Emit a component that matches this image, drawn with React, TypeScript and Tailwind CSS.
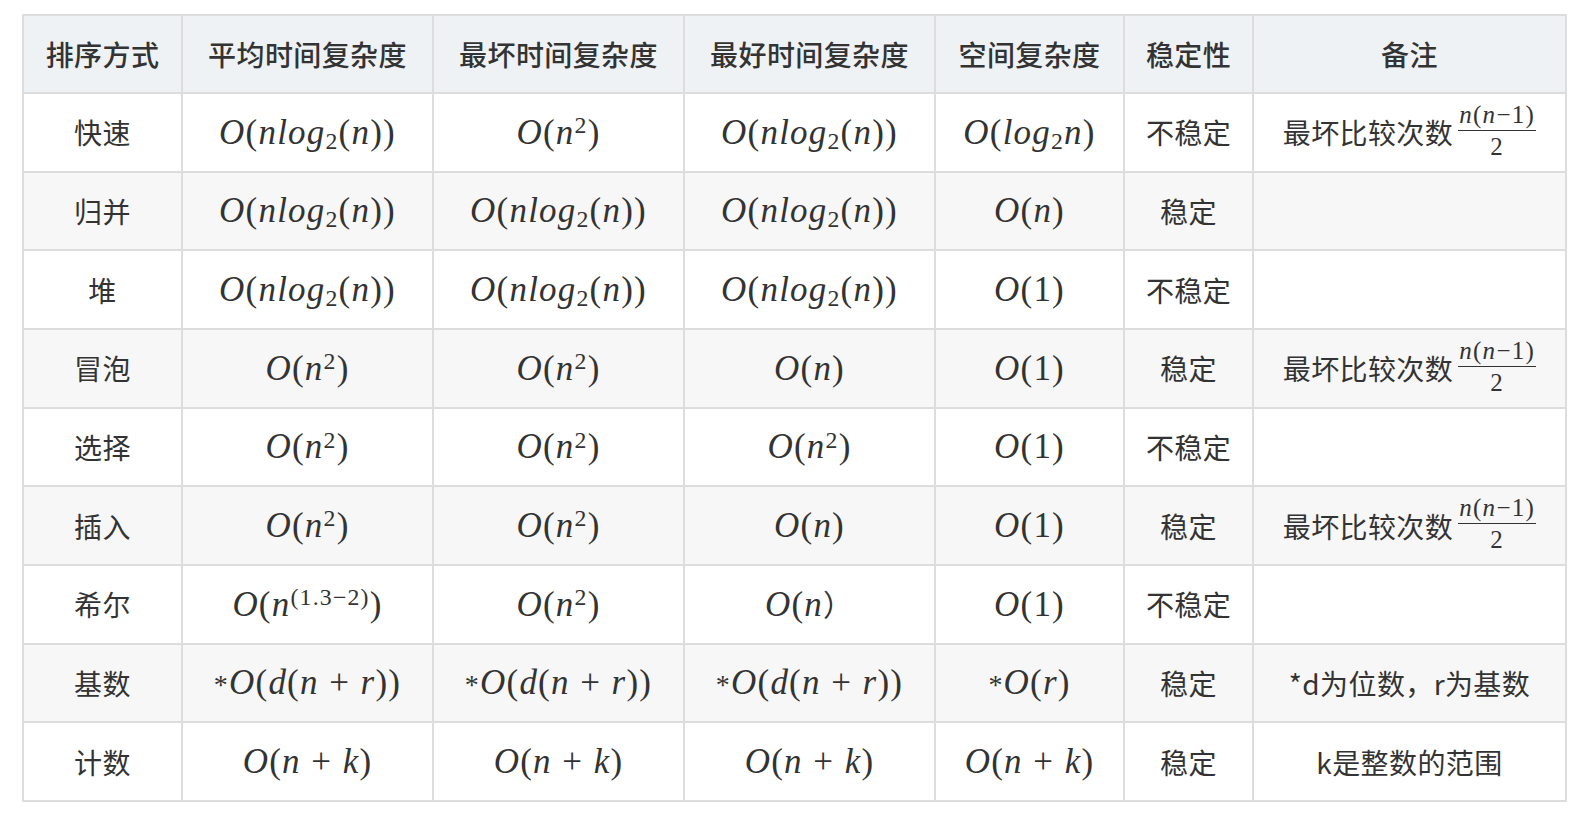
import React from "react";

const V = ({ children }: { children: React.ReactNode }) => (
  <span className="italic">{children}</span>
);
const Sub = ({ children }: { children: React.ReactNode }) => (
  <span className="relative top-[0.2em] text-[0.68em] not-italic">{children}</span>
);
const Sup = ({ children }: { children: React.ReactNode }) => (
  <span className="relative -top-[0.45em] text-[0.68em] not-italic">{children}</span>
);
const Plus = () => <span className="mx-[0.3em]">+</span>;

const M = ({ children }: { children: React.ReactNode }) => (
  <span className="font-['Liberation_Serif',serif] text-[35px] leading-none whitespace-nowrap tracking-[1.2px]">
    {children}
  </span>
);

const NLOG = (
  <M>
    <V>O</V>(<V>nlog</V>
    <Sub>2</Sub>(<V>n</V>))
  </M>
);
const N2 = (
  <M>
    <V>O</V>(<V>n</V>
    <Sup>2</Sup>)
  </M>
);
const ON = (
  <M>
    <V>O</V>(<V>n</V>)
  </M>
);
const ONFULL = (
  <M>
    <V>O</V>(<V>n</V>
    <span className="font-['Noto_Sans_CJK_SC',sans-serif] text-[0.85em]">）</span>
  </M>
);
const LOG2N = (
  <M>
    <V>O</V>(<V>log</V>
    <Sub>2</Sub>
    <V>n</V>)
  </M>
);
const O1 = (
  <M>
    <V>O</V>(1)
  </M>
);
const SHELL = (
  <M>
    <V>O</V>(<V>n</V>
    <Sup>(1.3−2)</Sup>)
  </M>
);
const DNR = (
  <M>
    <span className="text-[0.8em]">*</span>
    <V>O</V>(<V>d</V>(<V>n</V>
    <Plus />
    <V>r</V>))
  </M>
);
const OR = (
  <M>
    <span className="text-[0.8em]">*</span>
    <V>O</V>(<V>r</V>)
  </M>
);
const NK = (
  <M>
    <V>O</V>(<V>n</V>
    <Plus />
    <V>k</V>)
  </M>
);

const FracNote = (
  <span className="inline-flex items-center">
    <span>最坏比较次数</span>
    <span className="relative -top-[2px] ml-[5px] inline-flex flex-col items-center font-['Liberation_Serif',serif] text-[25px] leading-none tracking-[1.3px]">
      <span className="px-[1px] pb-[3px] whitespace-nowrap">
        <V>n</V>(<V>n</V>−1)
      </span>
      <span className="h-[1.5px] self-stretch bg-[#333]" />
      <span className="pt-[3px]">2</span>
    </span>
  </span>
);

const headers = ["排序方式", "平均时间复杂度", "最坏时间复杂度", "最好时间复杂度", "空间复杂度", "稳定性", "备注"];

const rows: React.ReactNode[][] = [
  ["快速", NLOG, N2, NLOG, LOG2N, "不稳定", FracNote],
  ["归并", NLOG, NLOG, NLOG, ON, "稳定", ""],
  ["堆", NLOG, NLOG, NLOG, O1, "不稳定", ""],
  ["冒泡", N2, N2, ON, O1, "稳定", FracNote],
  ["选择", N2, N2, N2, O1, "不稳定", ""],
  ["插入", N2, N2, ON, O1, "稳定", FracNote],
  ["希尔", SHELL, N2, ONFULL, O1, "不稳定", ""],
  ["基数", DNR, DNR, DNR, OR, "稳定", "*d为位数，r为基数"],
  ["计数", NK, NK, NK, NK, "稳定", "k是整数的范围"],
];

export default function App() {
  return (
    <div className="w-[1590px] h-[820px] bg-white pt-[14px] pl-[22px] font-['Noto_Sans_CJK_SC',sans-serif] text-[#333]">
      <div className="grid w-[1545px] h-[788px] grid-cols-[157px_249px_249px_249px_187px_127px_311px] grid-rows-[76px_repeat(9,1fr)] gap-[2px] p-[2px] bg-[#dddddd]">
        {headers.map((h) => (
          <div key={h} className="flex items-center justify-center bg-[#eef2f5] text-[28px] tracking-[0.4px] font-medium">
            {h}
          </div>
        ))}
        {rows.map((r, i) =>
          r.map((c, j) => (
            <div
              key={`${i}-${j}`}
              className={`flex items-center justify-center text-[28px] tracking-[0.4px] ${i % 2 === 1 ? "bg-[#f7f7f7]" : "bg-white"}`}
            >
              {c}
            </div>
          ))
        )}
      </div>
    </div>
  );
}
